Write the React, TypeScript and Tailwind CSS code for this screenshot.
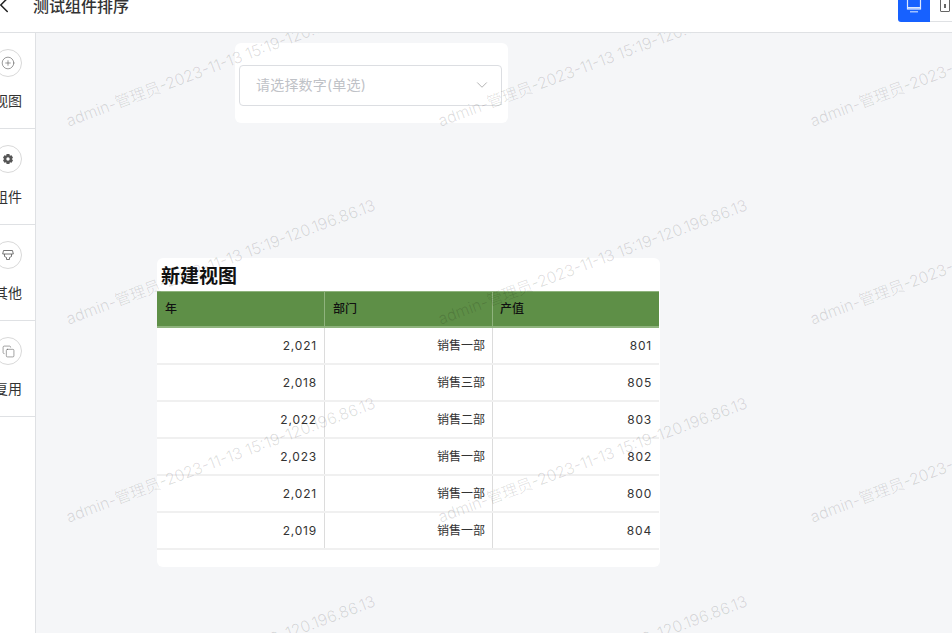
import { ChevronDown, ChevronLeft, CirclePlus, Copy } from "lucide-react";

const FONT = "font-['Inter','Noto_Sans_CJK_SC',sans-serif]";
const rows = [
  ["2,021", "销售一部", "801"],
  ["2,018", "销售三部", "805"],
  ["2,022", "销售二部", "803"],
  ["2,023", "销售一部", "802"],
  ["2,021", "销售一部", "800"],
  ["2,019", "销售一部", "804"],
];
const WM = "admin-管理员-2023-11-13 15:19-120.196.86.13";
const wmPos: { x: number; y: number }[] = [];
for (const y of [122, 320, 518, 716]) for (const x of [67, 439, 811]) wmPos.push({ x, y });

function Shield() {
  return (
    <svg width="14" height="14" viewBox="0 0 14 14" fill="none" stroke="#666" strokeWidth="0.9">
      <path d="M2.500 2.500h9l.8 3.500h-10.600z" />
      <path d="M3.500 6v2.500l2 1v2h3v-2l2-1V6" />
    </svg>
  );
}

function Gear() {
  return (
    <svg width="14" height="14" viewBox="0 0 14 14" fill="#555">
      <path
        fillRule="evenodd"
        d="M5.600 1h2.800l.5 1.700 1.700-.4 1.400 2.400-1.200 1.300 1.200 1.300-1.400 2.400-1.700-.4-.5 1.700H5.600l-.5-1.700-1.700.4L2 7.300l1.200-1.300L2 4.700l1.400-2.400 1.700.4zM7 4.300a1.700 1.700 0 100 3.400 1.700 1.700 0 000-3.400z"
        transform="translate(0 1)"
      />
    </svg>
  );
}

function SideItem({ icon, label }: { icon: React.ReactNode; label: string }) {
  return (
    <div className="h-[96px] border-b border-[#dfe1e4] flex flex-col items-center pt-[16px] w-[56px] -ml-[20px] shrink-0">
      <div className="w-[28px] h-[28px] rounded-full border border-[#d9d9d9] flex items-center justify-center text-[#555] shrink-0">{icon}</div>
      <div className="text-[14px] leading-[20px] mt-[14px] text-[#333]">{label}</div>
    </div>
  );
}

export default function App() {
  return (
    <div className={`${FONT} relative w-[952px] h-[633px] overflow-hidden bg-[#f5f6f8]`}>
      <header className="relative z-10 h-[33px] bg-white border-b border-[#dfe1e4] flex items-start">
        <ChevronLeft size={26} strokeWidth={1.4} className="text-[#222] -ml-[9px] -mt-[8px] shrink-0" />
        <div className="ml-[16px] -mt-[5px] text-[16px] leading-[22px] text-[#333] font-medium">测试组件排序</div>
        <div className="ml-auto flex h-[22px]">
          <div className="w-[32px] h-[22px] bg-[#1761ff] rounded-bl-[3px] flex items-start justify-center">
            <svg width="16" height="16" viewBox="0 0 16 16" fill="none" className="-mt-[1px]">
              <rect x="1.500" y="0" width="13" height="10" stroke="#dce8ff" strokeWidth="1.200" />
              <rect x="2" y="8" width="12" height="1.500" fill="#dce8ff" />
              <rect x="4" y="12" width="8" height="1.500" fill="#9fc0ff" />
            </svg>
          </div>
          <div className="w-[22px] h-[22px] bg-white border-b border-[#dfe1e4] flex items-start pl-[10px]">
            <div className="w-[10px] h-[13px] -mt-[1px] border border-[#666] rounded-[1px] flex items-center justify-center">
              <span className="w-[2px] h-[4px] border-x border-[#666]" />
            </div>
          </div>
        </div>
      </header>
      <div className="flex h-[600px]">
        <aside className="relative z-10 w-[36px] bg-white border-r border-[#dfe1e4] overflow-hidden shrink-0 flex flex-col">
          <SideItem icon={<CirclePlus size={14} strokeWidth={1} />} label="视图" />
          <SideItem icon={<Gear />} label="组件" />
          <SideItem icon={<Shield />} label="其他" />
          <SideItem icon={<Copy size={13} strokeWidth={1} />} label="复用" />
        </aside>
        <main className="flex-1">
          <div className="ml-[199px] mt-[10px] w-[273px] h-[80px] bg-white rounded-[6px] px-[4px] pt-[22px]">
            <div className="w-[263px] h-[41px] border border-[#dcdee2] rounded-[4px] flex items-center pl-[16px] pr-[10px] pb-[2px] text-[14px] tracking-[0.2px] text-[#bfc2c7]">
              <span className="flex-1">请选择数字(单选)</span>
              <ChevronDown size={18} strokeWidth={1} className="text-[#999] shrink-0" />
            </div>
          </div>
          <div className="ml-[121px] mt-[135px] w-[503px] h-[309px] bg-white rounded-[6px]">
            <div className="h-[33px] pl-[4px] text-[19px] leading-[37px] font-semibold text-[#111]">新建视图</div>
            <div className="w-[502px]">
              <div className="grid grid-cols-[168px_168px_166px] h-[37px] bg-[#5e8f47] border-t border-b-2 border-[#8fb37d] text-[12px] font-medium text-[#111]">
                <div className="flex items-center pl-[8px] border-r border-[#8fb37d]">年</div>
                <div className="flex items-center pl-[8px] border-r border-[#8fb37d]">部门</div>
                <div className="flex items-center pl-[7px]">产值</div>
              </div>
              {rows.map((r, i) => (
                <div key={i} className="grid grid-cols-[168px_168px_166px] h-[37px] border-b-2 border-[#f0f0f0] text-[12px] text-[#333] tracking-[0.8px]">
                  <div className="flex items-center justify-end pr-[7px] pt-[1px] border-r border-[#dcdcdc]">{r[0]}</div>
                  <div className="flex items-center justify-end pr-[7px] pt-[1px] border-r border-[#dcdcdc] tracking-normal">{r[1]}</div>
                  <div className="flex items-center justify-end pr-[7px] pt-[1px]">{r[2]}</div>
                </div>
              ))}
            </div>
          </div>
        </main>
      </div>
      <div className="absolute inset-0 pointer-events-none overflow-hidden">
        {wmPos.map((p, i) => (
          <span
            key={i}
            className="absolute whitespace-nowrap text-[15.750px] leading-none font-light text-[#00000024] origin-[0_50%] rotate-[-20.500deg]"
            style={{ left: p.x, top: p.y - 8 }}
          >
            {WM}
          </span>
        ))}
      </div>
    </div>
  );
}
